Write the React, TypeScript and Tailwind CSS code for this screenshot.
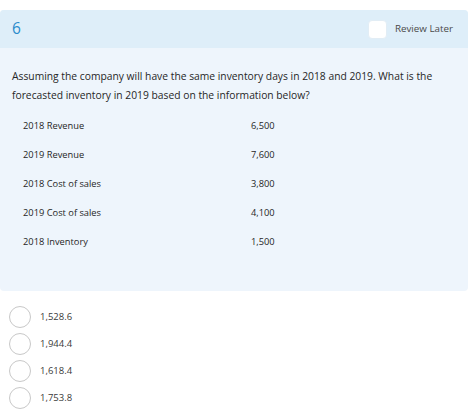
import React from 'react';

const rows = [
  { label: '2018 Revenue', value: '6,500' },
  { label: '2019 Revenue', value: '7,600' },
  { label: '2018 Cost of sales', value: '3,800' },
  { label: '2019 Cost of sales', value: '4,100' },
  { label: '2018 Inventory', value: '1,500' },
];

const options = ['1,528.6', '1,944.4', '1,618.4', '1,753.8'];

export default function App() {
  return (
    <div className="w-[474px] h-[416px] bg-white pt-[10px] overflow-hidden" style={{ fontFamily: '"Open Sans", "Noto Sans", sans-serif' }}>
      <div className="w-[468px] rounded-[4px] overflow-hidden bg-[#eef5fc]">
        {/* header */}
        <div className="h-[38px] bg-[#deeef9] flex items-center justify-between pl-[12px] pr-[15px]">
          <span className="text-[15.5px] leading-none text-[#2a8bcb]">6</span>
          <div className="flex items-center gap-[8px]">
            <div className="w-[19px] h-[19px] rounded-[4px] bg-white border border-[#e2edf5]" />
            <span className="text-[9.8px] text-[#4a4a4a]">Review Later</span>
          </div>
        </div>

        <div className="pt-[19px] pb-[35px]">
          <p className="px-[12px] text-[10.3px] leading-[19px] text-[#262626]">
            Assuming the company will have the same inventory days in 2018 and 2019. What is the forecasted inventory in 2019 based on the information below?
          </p>
          <div className="mt-[6px] flex flex-col">
            {rows.map(r => (
              <div key={r.label} className="h-[29px] flex items-center text-[9.3px] text-[#262626]">
                <span className="pl-[23px] w-[251px]">{r.label}</span>
                <span>{r.value}</span>
              </div>
            ))}
          </div>
        </div>
      </div>

      <div className="mt-[15px] flex flex-col gap-[5px] pl-[9px]">
        {options.map(o => (
          <label key={o} className="flex items-center gap-[9px]">
            <span className="w-[22px] h-[22px] rounded-full border-[1.5px] border-[#c8c8c8] bg-white" />
            <span className="text-[9.5px] text-[#3a3a3a]">{o}</span>
          </label>
        ))}
      </div>
    </div>
  );
}
